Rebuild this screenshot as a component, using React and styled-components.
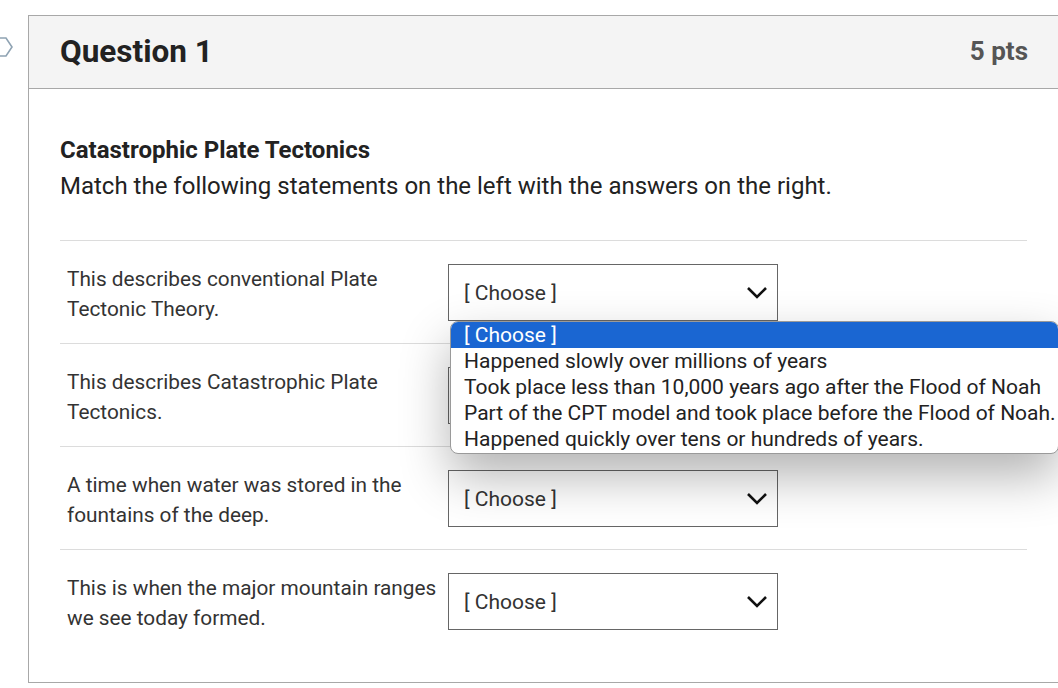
import React from 'react'
import styled, { createGlobalStyle } from 'styled-components'

const GlobalStyle = createGlobalStyle`
  html, body {
    margin: 0;
    padding: 0;
    background: #fff;
    overflow: hidden;
  }
  body {
    font-family: Roboto, "Liberation Sans", sans-serif;
    color: #222;
  }
`

const rows = [
  'This describes conventional Plate Tectonic Theory.',
  'This describes Catastrophic Plate Tectonics.',
  'A time when water was stored in the fountains of the deep.',
  'This is when the major mountain ranges we see today formed.',
]

const options = [
  '[ Choose ]',
  'Happened slowly over millions of years',
  'Took place less than 10,000 years ago after the Flood of Noah',
  'Part of the CPT model and took place before the Flood of Noah.',
  'Happened quickly over tens or hundreds of years.',
]

const Page = styled.div`
  position: relative;
  width: 1058px;
  height: 688px;
  padding: 15px 0 0 28px;
  box-sizing: border-box;
  overflow: hidden;
`

const Marker = styled.svg`
  position: absolute;
  left: -8px;
  top: 36px;
`

const Card = styled.div`
  border: 1px solid #a8a8a8;
  border-right: none;
`

const Header = styled.div`
  height: 72px;
  display: flex;
  align-items: center;
  justify-content: space-between;
  padding: 0 30px 0 31px;
  background: #f4f4f4;
  border-bottom: 1px solid #a8a8a8;
`

const Title = styled.h2`
  margin: 0 0 2px 0;
  font-size: 31.5px;
  font-weight: 700;
  color: #222;
`

const Points = styled.span`
  font-size: 26px;
  font-weight: 700;
  color: #555;
  margin-bottom: 2px;
`

const Body = styled.div`
  padding: 46px 31px 30px 31px;
`

const Topic = styled.div`
  font-size: 24px;
  font-weight: 700;
  line-height: 30px;
`

const Prompt = styled.div`
  font-size: 24px;
  line-height: 30px;
  margin: 6px 0 39px 0;
`

const Row = styled.div`
  display: flex;
  align-items: flex-start;
  border-top: 1px solid #dcdcdc;
  padding: 23px 0 23px 7px;
  height: 56px;
`

const Statement = styled.div`
  width: 381px;
  padding-right: 4px;
  box-sizing: border-box;
  font-size: 20.8px;
  line-height: 30px;
  color: #333;
`

const SelectWrap = styled.div`
  position: relative;
`

const Select = styled.div`
  box-sizing: border-box;
  width: 330px;
  height: 57px;
  border: 1px solid #666;
  display: flex;
  align-items: center;
  justify-content: space-between;
  padding: 0 9px 0 15px;
  font-size: 21px;
  color: #333;
  background: #fff;
`

const List = styled.div`
  position: absolute;
  top: 57px;
  left: 2px;
  width: 607px;
  z-index: 5;
  background: #fff;
  border: 1px solid #9a9a9a;
  border-radius: 8px;
  overflow: hidden;
  padding-bottom: 1px;
  box-shadow: 0 22px 50px rgba(0, 0, 0, 0.3);
`

const Option = styled.div`
  height: 26px;
  line-height: 26px;
  padding-left: 13px;
  font-size: 21px;
  white-space: nowrap;
  color: ${p => (p.$active ? '#fff' : '#222')};
  background: ${p => (p.$active ? '#1a66d2' : 'transparent')};
`

const Chevron = () => (
  <svg width="22" height="14" viewBox="0 0 22 14">
    <path d="M2 2 L11 11 L20 2" fill="none" stroke="#111" strokeWidth="2.6" strokeLinejoin="miter" />
  </svg>
)

const App = () => {
  return (
    <Page>
      <GlobalStyle />
      <Marker width="22" height="22" viewBox="0 0 22 22">
        <path d="M2 2 H14 L20 11 L14 20 H2 Z" fill="#fff" stroke="#8fa3b3" strokeWidth="1.6" />
      </Marker>
      <Card>
        <Header>
          <Title>Question 1</Title>
          <Points>5 pts</Points>
        </Header>
        <Body>
          <Topic>Catastrophic Plate Tectonics</Topic>
          <Prompt>Match the following statements on the left with the answers on the right.</Prompt>
          {rows.map((text, i) => (
            <Row key={i}>
              <Statement>{text}</Statement>
              <SelectWrap>
                <Select>
                  <span>[ Choose ]</span>
                  <Chevron />
                </Select>
                {i === 0 && (
                  <List>
                    {options.map((o, j) => (
                      <Option key={j} $active={j === 0}>{o}</Option>
                    ))}
                  </List>
                )}
              </SelectWrap>
            </Row>
          ))}
        </Body>
      </Card>
    </Page>
  )
}

export default App
